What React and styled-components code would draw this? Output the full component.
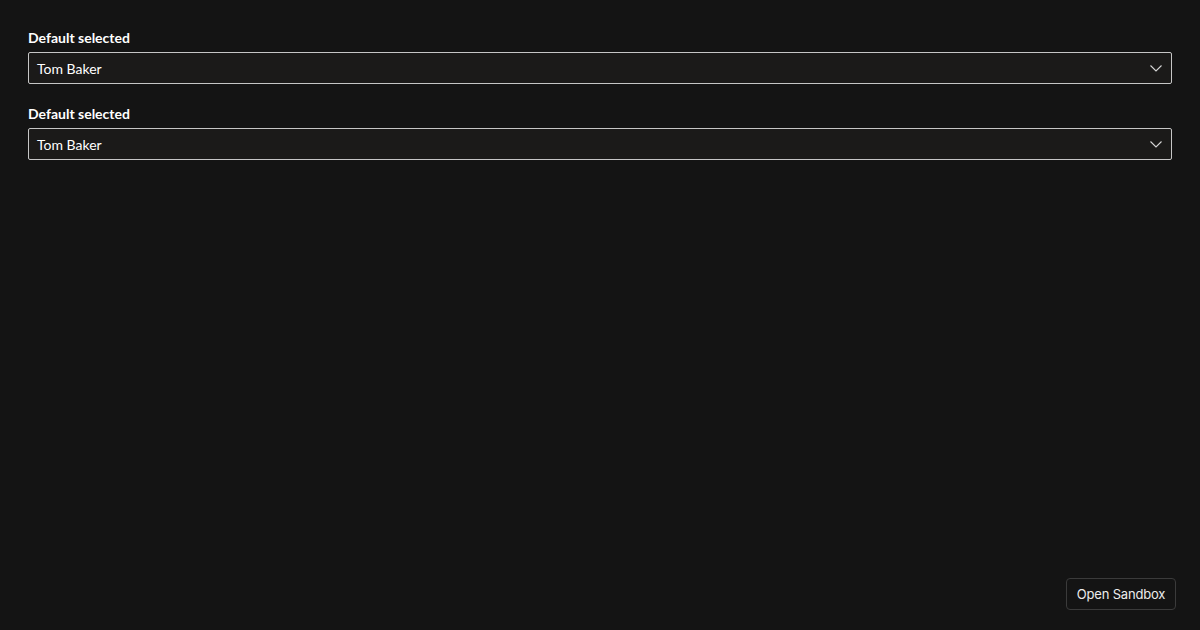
import React from "react";
import styled, { createGlobalStyle } from "styled-components";

const Global = createGlobalStyle`
  html, body { margin: 0; padding: 0; background: #141414; }
  body { font-family: "Segoe UI", Lato, "Noto Sans", sans-serif; color: #ffffff; }
  * { box-sizing: border-box; }
`;

const Page = styled.div`
  min-height: 630px;
  padding: 28px 28px 0 28px;
  display: flex;
  flex-direction: column;
  gap: 20px;
`;

const Field = styled.div`
  display: flex;
  flex-direction: column;
  gap: 4px;
`;

const Label = styled.label`
  font-size: 14px;
  font-weight: 700;
  line-height: 20px;
  color: #ffffff;
`;

const SelectBox = styled.div`
  height: 32px;
  border: 1px solid #c6c6c6;
  border-radius: 2px;
  background: #1b1a19;
  display: flex;
  align-items: center;
  padding: 0 8px;
  font-size: 14px;
  color: #ffffff;
`;

const Value = styled.span`
  flex: 1;
`;

const Chevron = styled.svg`
  width: 14px;
  height: 14px;
`;

const SandboxButton = styled.button`
  position: fixed;
  right: 24px;
  bottom: 20px;
  height: 32px;
  width: 110px;
  background: #141414;
  border: 1px solid #3b3b3b;
  border-radius: 4px;
  color: #ececec;
  font-family: Inter, "Noto Sans", sans-serif;
  font-size: 13px;
  letter-spacing: -0.2px;
  cursor: pointer;
`;

function Select({ label, value }) {
  return (
    <Field>
      <Label>{label}</Label>
      <SelectBox>
        <Value>{value}</Value>
        <Chevron viewBox="0 0 14 14" fill="none">
          <path d="M1.5 4.5 L7 10 L12.5 4.5" stroke="#d6d6d6" strokeWidth="1.1" />
        </Chevron>
      </SelectBox>
    </Field>
  );
}

export default function App() {
  return (
    <>
      <Global />
      <Page>
        <Select label="Default selected" value="Tom Baker" />
        <Select label="Default selected" value="Tom Baker" />
      </Page>
      <SandboxButton>Open Sandbox</SandboxButton>
    </>
  );
}
